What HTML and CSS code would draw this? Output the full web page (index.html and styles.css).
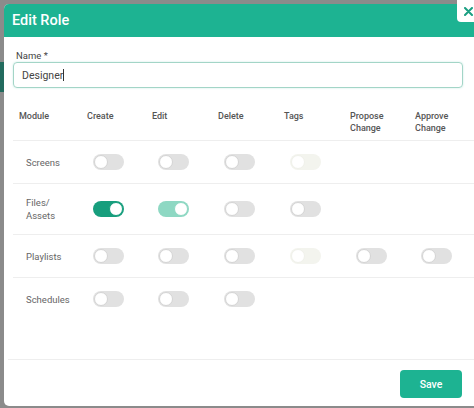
FILE: index.html
```html
<!DOCTYPE html>
<html>
<head>
<meta charset="utf-8">
<link rel="stylesheet" href="styles.css">
</head>
<body>
<div class="bg-strip"></div>
<div class="modal">
  <div class="modal-header"><span class="title">Edit Role</span></div>
  <div class="modal-body">
    <label class="field-label">Name *</label>
    <div class="input"><span class="input-text">Designer</span><span class="caret"></span></div>
    <div class="table">
      <div class="row head">
        <div class="hcell">Module</div>
        <div class="hcell">Create</div>
        <div class="hcell">Edit</div>
        <div class="hcell">Delete</div>
        <div class="hcell">Tags</div>
        <div class="hcell">Propose<br>Change</div>
        <div class="hcell">Approve<br>Change</div>
      </div>
      <div class="row">
        <div class="label">Screens</div>
        <div class="cell"><span class="toggle"></span></div>
        <div class="cell"><span class="toggle"></span></div>
        <div class="cell"><span class="toggle"></span></div>
        <div class="cell"><span class="toggle disabled"></span></div>
        <div class="cell"></div>
        <div class="cell"></div>
      </div>
      <div class="row tall">
        <div class="label">Files/<br>Assets</div>
        <div class="cell"><span class="toggle on"></span></div>
        <div class="cell"><span class="toggle on disabled"></span></div>
        <div class="cell"><span class="toggle"></span></div>
        <div class="cell"><span class="toggle"></span></div>
        <div class="cell"></div>
        <div class="cell"></div>
      </div>
      <div class="row">
        <div class="label">Playlists</div>
        <div class="cell"><span class="toggle"></span></div>
        <div class="cell"><span class="toggle"></span></div>
        <div class="cell"><span class="toggle"></span></div>
        <div class="cell"><span class="toggle disabled"></span></div>
        <div class="cell"><span class="toggle"></span></div>
        <div class="cell"><span class="toggle"></span></div>
      </div>
      <div class="row last">
        <div class="label">Schedules</div>
        <div class="cell"><span class="toggle"></span></div>
        <div class="cell"><span class="toggle"></span></div>
        <div class="cell"><span class="toggle"></span></div>
        <div class="cell"></div>
        <div class="cell"></div>
        <div class="cell"></div>
      </div>
    </div>
  </div>
  <div class="modal-footer"><button class="save">Save</button></div>
</div>
<div class="close">
  <svg width="9" height="9" viewBox="0 0 9 9"><path d="M1 1L8 8M8 1L1 8" stroke="#1a9f82" stroke-width="2" stroke-linecap="round"/></svg>
</div>
</body>
</html>
```
FILE: styles.css
```css
html, body {
  margin: 0;
  padding: 0;
}
body {
  width: 474px;
  height: 408px;
  overflow: hidden;
  background: #8b8b8b;
  font-family: Roboto, "Liberation Sans", sans-serif;
  position: relative;
}
.bg-strip {
  position: absolute;
  left: 0;
  top: 62px;
  width: 6px;
  height: 30px;
  background: #226b5e;
}
.modal {
  position: relative;
  margin: 4px 0 0 4px;
  width: 470px;
  height: 402px;
  background: #fff;
  border-radius: 5px 0 0 5px;
  display: flex;
  flex-direction: column;
  overflow: hidden;
}
.modal-header {
  height: 33px;
  background: #1db392;
  display: flex;
  align-items: center;
  padding-left: 8px;
  flex: none;
}
.title {
  color: #fff;
  font-size: 14.5px;
  font-weight: 500;
}
.modal-body {
  flex: 1;
  padding: 13px 0 0 9px;
}
.field-label {
  display: block;
  font-size: 9.5px;
  line-height: 12px;
  color: #444;
  padding-left: 3px;
}
.input {
  width: 450px;
  height: 26px;
  box-sizing: border-box;
  border: 1px solid #a3d5c7;
  border-radius: 4px;
  box-shadow: 0 0 2px rgba(29,179,146,0.25);
  display: flex;
  align-items: center;
  padding-left: 8px;
}
.input-text {
  font-size: 10.5px;
  color: #444;
}
.caret {
  display: inline-block;
  width: 1px;
  height: 12px;
  background: #333;
}
.table {
  margin-top: 12px;
}
.row {
  display: grid;
  grid-template-columns: 68px 65px 66px 66px 66px 65px 1fr;
  height: 42px;
  border-bottom: 1px solid #eeeeee;
  align-items: center;
}
.row.tall {
  height: 50px;
}
.row.last {
  border-bottom: none;
}
.row.head {
  height: 40px;
  align-items: start;
}
.hcell {
  padding: 10px 0 0 6px;
  font-size: 9px;
  line-height: 12px;
  font-weight: 500;
  color: #555;
}
.label {
  padding-left: 13px;
  font-size: 9.5px;
  line-height: 13px;
  color: #666;
}
.cell {
  padding-left: 12px;
  height: 16px;
}
.toggle {
  display: block;
  position: relative;
  width: 31px;
  height: 16px;
  border-radius: 8px;
  background: #e1e1e1;
}
.toggle::after {
  content: "";
  position: absolute;
  top: 1px;
  left: 1px;
  width: 12px;
  height: 12px;
  border-radius: 50%;
  background: #fff;
  border: 1px solid #d4d4d4;
}
.toggle.on {
  background: #179e7d;
}
.toggle.on::after {
  left: auto;
  right: 1px;
  border-color: #179e7d;
}
.toggle.disabled {
  background: #f3f4ee;
}
.toggle.disabled::after {
  border-color: #f0f1ea;
}
.toggle.on.disabled {
  background: #8ed8c3;
}
.toggle.on.disabled::after {
  border-color: #8ed8c3;
}
.modal-footer {
  flex: none;
  height: 47px;
  border-top: 1px solid #eeeeee;
  margin-left: 4px;
  display: flex;
  justify-content: flex-end;
  align-items: flex-start;
  padding: 10px 12px 0 0;
  box-sizing: border-box;
}
.save {
  width: 62px;
  height: 28px;
  border: none;
  border-radius: 4px;
  background: #1db392;
  color: #fff;
  font-family: Roboto, "Liberation Sans", sans-serif;
  font-size: 10.5px;
  font-weight: 500;
}
.close {
  position: absolute;
  top: 0;
  right: 0;
  width: 17px;
  height: 22px;
  background: #fff;
  border-radius: 0 0 0 4px;
  display: flex;
  align-items: center;
  justify-content: flex-end;
  padding-right: 1px;
  box-sizing: border-box;
}
```
